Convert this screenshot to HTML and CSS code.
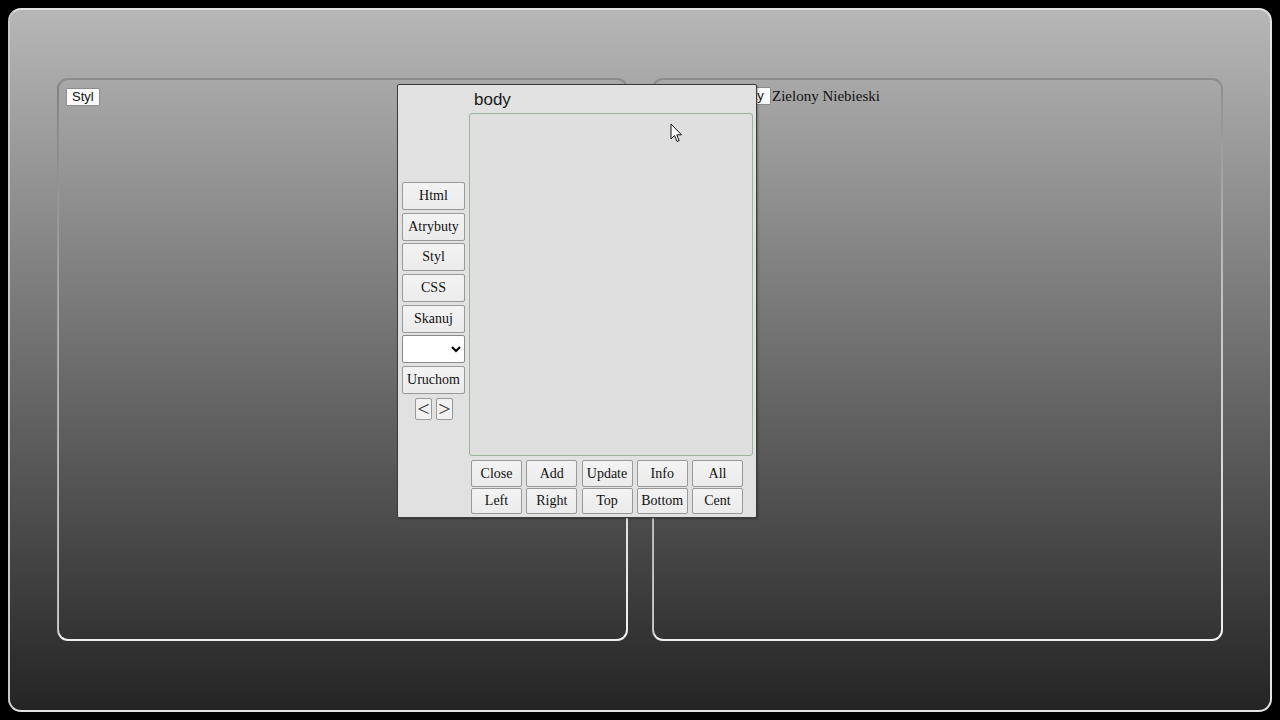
FILE: index.html
```html
<!DOCTYPE html>
<html lang="pl">
<head>
<meta charset="utf-8">
<title>Edytor</title>
<link rel="stylesheet" href="styles.css">
</head>
<body>
<div class="frame">
  <section class="panel panel-left">
    <button class="mini">Styl</button>
  </section>
  <section class="panel panel-right">
    <div class="bar">
      <button class="mini">Html</button>
      <button class="mini">Atrybuty</button>
      <span class="colors">Zielony Niebieski</span>
    </div>
  </section>

  <div class="dialog">
    <div class="title">body</div>
    <div class="side">
      <button class="btn">Html</button>
      <button class="btn">Atrybuty</button>
      <button class="btn">Styl</button>
      <button class="btn">CSS</button>
      <button class="btn">Skanuj</button>
      <select class="sel"><option></option></select>
      <button class="btn">Uruchom</button>
      <div class="arrows">
        <button class="arrow">&lt;</button>
        <button class="arrow">&gt;</button>
      </div>
    </div>
    <textarea class="editor"></textarea>
    <div class="actions">
      <button class="btn">Close</button>
      <button class="btn">Add</button>
      <button class="btn">Update</button>
      <button class="btn">Info</button>
      <button class="btn">All</button>
      <button class="btn">Left</button>
      <button class="btn">Right</button>
      <button class="btn">Top</button>
      <button class="btn">Bottom</button>
      <button class="btn">Cent</button>
    </div>
  </div>

  <svg class="cursor" width="13" height="20" viewBox="0 0 13 20">
    <path d="M1 1 L1 16 L4.5 12.5 L7 18.5 L9.2 17.6 L6.8 11.8 L11.5 11.8 Z" fill="#fff" stroke="#111" stroke-width="1" stroke-linejoin="round"/>
  </svg>
</div>
</body>
</html>
```
FILE: styles.css
```css
html, body {
  background: #000;
}
body {
  margin: 8px;
  font-family: "Liberation Serif", "Times New Roman", serif;
}
.frame {
  position: relative;
  box-sizing: border-box;
  height: 704px;
  border: 2px solid #e2e2e2;
  border-left-color: #c8c8c8;
  border-radius: 13px;
  background: linear-gradient(#b9b9b9, #222222) fixed;
  display: flex;
  gap: 24px;
  padding: 68px 47px 69px 47px;
}
.panel {
  box-sizing: border-box;
  flex: 1;
  height: 563px;
  border: 2px solid transparent;
  border-radius: 11px;
  background:
    linear-gradient(#b9b9b9, #222222) fixed padding-box,
    linear-gradient(to right, rgba(110,110,110,0.45) 0, rgba(110,110,110,0) 4px) border-box,
    linear-gradient(#8c8c8c 0%, #c4c4c4 40%, #f0f0f0 100%) border-box;
  padding: 7px;
}
.mini {
  font-family: "Liberation Sans", Arial, sans-serif;
  font-size: 13px;
  height: 18px;
  padding: 0 5px;
  background: #fafafa;
  border: 1px solid #8c8c8c;
  border-radius: 1px;
  color: #111;
  line-height: 16px;
}
.bar {
  display: flex;
  align-items: center;
  gap: 4px;
}
.bar .mini:first-child {
  width: 44px;
}
.bar .mini:nth-child(2) {
  width: 62px;
}
.colors {
  font-size: 15px;
  color: #111;
  margin-left: -3px;
}

.dialog {
  position: absolute;
  left: 387px;
  top: 74px;
  box-sizing: border-box;
  width: 360px;
  height: 434px;
  background: #e1e1e1;
  border: 1px solid #3c3c3c;
  border-radius: 2px;
  display: grid;
  grid-template-columns: 63px 284px;
  grid-template-rows: 28px 343px 54px;
  column-gap: 4px;
  row-gap: 0;
  padding: 0 3px 3px 4px;
  box-shadow: 1px 1px 2px rgba(0,0,0,0.3);
}
.title {
  grid-column: 2;
  grid-row: 1;
  font-family: "Liberation Sans", Arial, sans-serif;
  font-size: 17px;
  color: #1a1a1a;
  padding: 5px 0 0 5px;
}
.side {
  grid-column: 1;
  grid-row: 2 / 4;
  display: flex;
  flex-direction: column;
  gap: 2.67px;
  padding-top: 69px;
}
.btn {
  font-family: "Liberation Serif", "Times New Roman", serif;
  font-size: 14px;
  color: #111;
  height: 28px;
  padding: 0;
  background: linear-gradient(#f3f3f3, #ebebeb);
  border: 1px solid #999;
  border-radius: 2px;
  white-space: nowrap;
}
.sel {
  height: 28px;
  width: 63px;
  background: #fff;
  border: 1px solid #8a8a8a;
  border-radius: 2px;
  font-size: 14px;
}
.arrows {
  display: flex;
  justify-content: center;
  gap: 4px;
  margin-top: 1px;
  padding-left: 1px;
}
.arrow {
  width: 17px;
  height: 22px;
  padding: 0;
  font-family: "Liberation Serif", "Times New Roman", serif;
  font-size: 22px;
  line-height: 18px;
  color: #333;
  background: #f1f1f1;
  border: 1px solid #999;
  border-radius: 2px;
}
.editor {
  grid-column: 2;
  grid-row: 2;
  box-sizing: border-box;
  width: 284px;
  height: 343px;
  margin: 0;
  background: #dedfde;
  border: 1px solid #9db39d;
  border-radius: 3px;
  resize: none;
}
.actions {
  grid-column: 2;
  grid-row: 3;
  display: grid;
  grid-template-columns: repeat(5, 51px);
  grid-template-rows: 27px 26px;
  column-gap: 4.25px;
  row-gap: 1px;
  padding: 4px 0 0 2px;
}
.actions .btn {
  height: auto;
}
.cursor {
  position: absolute;
  left: 660px;
  top: 113px;
}
```
